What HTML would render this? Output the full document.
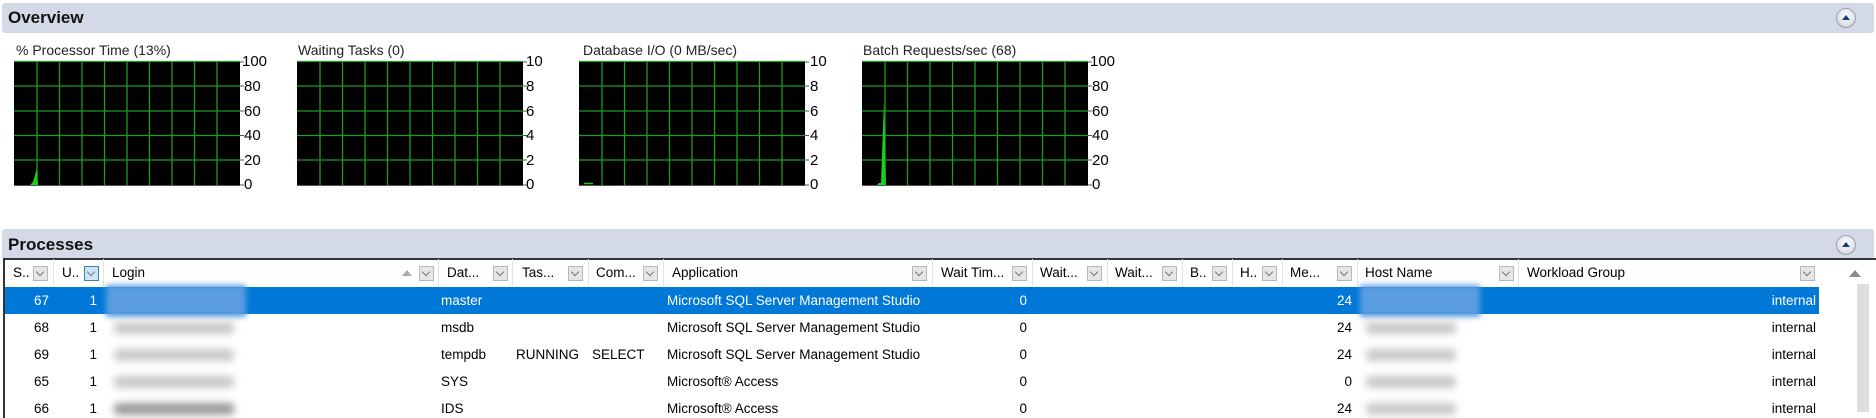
<!DOCTYPE html>
<html><head><meta charset="utf-8"><style>
*{margin:0;padding:0;box-sizing:border-box}
body{width:1876px;height:412px;background:#fff;position:relative;overflow:hidden;font-family:"Liberation Sans",sans-serif;color:#000}
.band{position:absolute;left:2px;width:1872px;height:30px;background:#d3d9e6;border-radius:3px}
.band b{position:absolute;left:6px;top:5px;font-size:17px;font-weight:bold;color:#111}
.circ{position:absolute;right:18px;top:5px;width:20px;height:20px;border-radius:50%;background:radial-gradient(circle at 50% 40%,#fff,#dfe3e8 60%,#aab2bd);border:1px solid #9aa3ae}
.circ:after{content:"";position:absolute;left:5px;top:6px;border-left:4px solid transparent;border-right:4px solid transparent;border-bottom:5px solid #1c3c78}
.lbl{position:absolute;top:42px;font-size:14px;color:#222}
.ax{position:absolute;font-size:15px;color:#000}
.t{position:absolute;font-size:13.5px;white-space:nowrap;line-height:16px}
.dd{position:absolute;top:266px;width:15px;height:15px;background:#e6e6e6;border:1px solid #b8b8b8}
.dd:after{content:"";position:absolute;left:3px;top:2px;width:5px;height:5px;border-right:1px solid #777;border-bottom:1px solid #777;transform:rotate(45deg)}
.sep{position:absolute;top:259px;width:1px;height:27px;background:#e3e3e3}
.blur{position:absolute;height:12px;background:#c8c8c8;filter:blur(4px);border-radius:4px}
</style></head><body>
<div class="band" style="top:3px"><b>Overview</b><div class="circ"></div></div>

<div class="lbl" style="left:16px">% Processor Time (13%)</div>
<div class="lbl" style="left:298px">Waiting Tasks (0)</div>
<div class="lbl" style="left:583px">Database I/O (0 MB/sec)</div>
<div class="lbl" style="left:863px">Batch Requests/sec (68)</div>

<svg style="position:absolute;left:0;top:0" width="1200" height="200">
<defs>
<g id="grid">
<rect x="0" y="0" width="226" height="124" fill="#000"/>
<g stroke="#1f9a1f" stroke-width="1.3">
<line x1="0" y1="0.5" x2="226" y2="0.5"/>
<line x1="0" y1="25" x2="226" y2="25"/><line x1="0" y1="50" x2="226" y2="50"/><line x1="0" y1="74.5" x2="226" y2="74.5"/><line x1="0" y1="99" x2="226" y2="99"/>
<line x1="23" y1="0" x2="23" y2="124"/><line x1="45.5" y1="0" x2="45.5" y2="124"/><line x1="68" y1="0" x2="68" y2="124"/><line x1="90.5" y1="0" x2="90.5" y2="124"/><line x1="113" y1="0" x2="113" y2="124"/><line x1="135.5" y1="0" x2="135.5" y2="124"/><line x1="158" y1="0" x2="158" y2="124"/><line x1="180.5" y1="0" x2="180.5" y2="124"/><line x1="203" y1="0" x2="203" y2="124"/>
</g>
<g stroke="#555" stroke-width="1">
<line x1="0" y1="124.5" x2="226" y2="124.5"/>
<line x1="226" y1="1" x2="230" y2="1"/><line x1="226" y1="25" x2="230" y2="25"/><line x1="226" y1="50" x2="230" y2="50"/><line x1="226" y1="74.5" x2="230" y2="74.5"/><line x1="226" y1="99" x2="230" y2="99"/><line x1="226" y1="124" x2="230" y2="124"/>
</g>
</g>
</defs>
<use href="#grid" x="14" y="61"/>
<use href="#grid" x="297" y="61"/>
<use href="#grid" x="579" y="61"/>
<use href="#grid" x="862" y="61"/>
<polygon points="30,185 33,182 37,168 38,185" fill="#19d019"/>
<line x1="584" y1="183.5" x2="593" y2="183.5" stroke="#19d019" stroke-width="1.5"/>
<polygon points="877,185 879,183 881,183 884,101 886,185" fill="#19d019"/>
</svg>

<div class="ax" style="left:242px;top:53px">100</div><div class="ax" style="left:244px;top:78px">80</div><div class="ax" style="left:244px;top:103px">60</div><div class="ax" style="left:244px;top:127px">40</div><div class="ax" style="left:244px;top:152px">20</div><div class="ax" style="left:244px;top:176px">0</div>
<div class="ax" style="left:526px;top:53px">10</div><div class="ax" style="left:526px;top:78px">8</div><div class="ax" style="left:526px;top:103px">6</div><div class="ax" style="left:526px;top:127px">4</div><div class="ax" style="left:526px;top:152px">2</div><div class="ax" style="left:526px;top:176px">0</div>
<div class="ax" style="left:810px;top:53px">10</div><div class="ax" style="left:810px;top:78px">8</div><div class="ax" style="left:810px;top:103px">6</div><div class="ax" style="left:810px;top:127px">4</div><div class="ax" style="left:810px;top:152px">2</div><div class="ax" style="left:810px;top:176px">0</div>
<div class="ax" style="left:1090px;top:53px">100</div><div class="ax" style="left:1092px;top:78px">80</div><div class="ax" style="left:1092px;top:103px">60</div><div class="ax" style="left:1092px;top:127px">40</div><div class="ax" style="left:1092px;top:152px">20</div><div class="ax" style="left:1092px;top:176px">0</div>

<div class="band" style="top:229px;height:31px"><b style="top:6px">Processes</b><div class="circ" style="top:6px"></div></div>

<div style="position:absolute;left:3px;top:258px;width:1873px;height:160px;border-left:2px solid #333;border-top:2px solid #333;background:#fff"></div>
<!-- scrollbar -->
<div style="position:absolute;left:1820px;top:260px;width:56px;height:152px;background:#fff"></div>
<div style="position:absolute;left:1849px;top:270px;border-left:6px solid transparent;border-right:6px solid transparent;border-bottom:7px solid #8a8a8a"></div>
<div style="position:absolute;left:1857px;top:284px;width:12px;height:128px;background:#dedede"></div>

<!-- header -->
<div class="sep" style="left:53px"></div><div class="sep" style="left:103px"></div><div class="sep" style="left:438px"></div><div class="sep" style="left:512px"></div><div class="sep" style="left:588px"></div><div class="sep" style="left:663px"></div><div class="sep" style="left:932px"></div><div class="sep" style="left:1032px"></div><div class="sep" style="left:1107px"></div><div class="sep" style="left:1182px"></div><div class="sep" style="left:1232px"></div><div class="sep" style="left:1282px"></div><div class="sep" style="left:1357px"></div><div class="sep" style="left:1518px"></div>
<div class="t" style="left:13px;top:265px">S..</div><div class="dd" style="left:33px"></div>
<div class="t" style="left:62px;top:265px">U..</div><div class="dd" style="left:84px;background:#cde4f7;border-color:#3c7fb1"></div>
<div class="t" style="left:112px;top:265px">Login</div>
<div style="position:absolute;left:402px;top:270px;border-left:5px solid transparent;border-right:5px solid transparent;border-bottom:6px solid #aaa"></div><div class="dd" style="left:419px"></div>
<div class="t" style="left:447px;top:265px">Dat...</div><div class="dd" style="left:493px"></div>
<div class="t" style="left:522px;top:265px">Tas...</div><div class="dd" style="left:568px"></div>
<div class="t" style="left:596px;top:265px">Com...</div><div class="dd" style="left:643px"></div>
<div class="t" style="left:672px;top:265px">Application</div><div class="dd" style="left:912px"></div>
<div class="t" style="left:941px;top:265px">Wait Tim...</div><div class="dd" style="left:1012px"></div>
<div class="t" style="left:1040px;top:265px">Wait...</div><div class="dd" style="left:1087px"></div>
<div class="t" style="left:1115px;top:265px">Wait...</div><div class="dd" style="left:1162px"></div>
<div class="t" style="left:1190px;top:265px">B..</div><div class="dd" style="left:1212px"></div>
<div class="t" style="left:1240px;top:265px">H..</div><div class="dd" style="left:1262px"></div>
<div class="t" style="left:1290px;top:265px">Me...</div><div class="dd" style="left:1337px"></div>
<div class="t" style="left:1365px;top:265px">Host Name</div><div class="dd" style="left:1499px"></div>
<div class="t" style="left:1527px;top:265px">Workload Group</div><div class="dd" style="left:1800px"></div>

<!-- selected row -->
<div style="position:absolute;left:5px;top:287px;width:1814px;height:27px;background:#0078d7"></div>
<div style="position:absolute;left:106px;top:285px;width:140px;height:32px;background:#5a9de0;filter:blur(3px)"></div>
<div style="position:absolute;left:1360px;top:285px;width:120px;height:32px;background:#5a9de0;filter:blur(3px)"></div>

<div style="color:#fff">
<div class="t" style="left:29px;top:293px;width:20px;text-align:right">67</div>
<div class="t" style="left:87px;top:293px;width:10px;text-align:right">1</div>
<div class="t" style="left:441px;top:293px">master</div>
<div class="t" style="left:667px;top:293px">Microsoft SQL Server Management Studio</div>
<div class="t" style="left:1017px;top:293px;width:10px;text-align:right">0</div>
<div class="t" style="left:1322px;top:293px;width:30px;text-align:right">24</div>
<div class="t" style="left:1740px;top:293px;width:76px;text-align:right">internal</div>
</div>

<div class="t" style="left:29px;top:320px;width:20px;text-align:right">68</div>
<div class="t" style="left:87px;top:320px;width:10px;text-align:right">1</div>
<div class="blur" style="left:114px;top:322px;width:120px"></div>
<div class="t" style="left:441px;top:320px">msdb</div>
<div class="t" style="left:667px;top:320px">Microsoft SQL Server Management Studio</div>
<div class="t" style="left:1017px;top:320px;width:10px;text-align:right">0</div>
<div class="t" style="left:1322px;top:320px;width:30px;text-align:right">24</div>
<div class="blur" style="left:1366px;top:322px;width:90px"></div>
<div class="t" style="left:1740px;top:320px;width:76px;text-align:right">internal</div>

<div class="t" style="left:29px;top:347px;width:20px;text-align:right">69</div>
<div class="t" style="left:87px;top:347px;width:10px;text-align:right">1</div>
<div class="blur" style="left:114px;top:349px;width:120px"></div>
<div class="t" style="left:441px;top:347px">tempdb</div>
<div class="t" style="left:516px;top:347px">RUNNING</div>
<div class="t" style="left:592px;top:347px">SELECT</div>
<div class="t" style="left:667px;top:347px">Microsoft SQL Server Management Studio</div>
<div class="t" style="left:1017px;top:347px;width:10px;text-align:right">0</div>
<div class="t" style="left:1322px;top:347px;width:30px;text-align:right">24</div>
<div class="blur" style="left:1366px;top:349px;width:90px"></div>
<div class="t" style="left:1740px;top:347px;width:76px;text-align:right">internal</div>

<div class="t" style="left:29px;top:374px;width:20px;text-align:right">65</div>
<div class="t" style="left:87px;top:374px;width:10px;text-align:right">1</div>
<div class="blur" style="left:114px;top:376px;width:120px"></div>
<div class="t" style="left:441px;top:374px">SYS</div>
<div class="t" style="left:667px;top:374px">Microsoft® Access</div>
<div class="t" style="left:1017px;top:374px;width:10px;text-align:right">0</div>
<div class="t" style="left:1322px;top:374px;width:30px;text-align:right">0</div>
<div class="blur" style="left:1366px;top:376px;width:90px"></div>
<div class="t" style="left:1740px;top:374px;width:76px;text-align:right">internal</div>

<div class="t" style="left:29px;top:401px;width:20px;text-align:right">66</div>
<div class="t" style="left:87px;top:401px;width:10px;text-align:right">1</div>
<div class="blur" style="left:114px;top:403px;width:120px;background:#999"></div>
<div class="t" style="left:441px;top:401px">IDS</div>
<div class="t" style="left:667px;top:401px">Microsoft® Access</div>
<div class="t" style="left:1017px;top:401px;width:10px;text-align:right">0</div>
<div class="t" style="left:1322px;top:401px;width:30px;text-align:right">24</div>
<div class="blur" style="left:1366px;top:403px;width:90px"></div>
<div class="t" style="left:1740px;top:401px;width:76px;text-align:right">internal</div>
</body></html>
